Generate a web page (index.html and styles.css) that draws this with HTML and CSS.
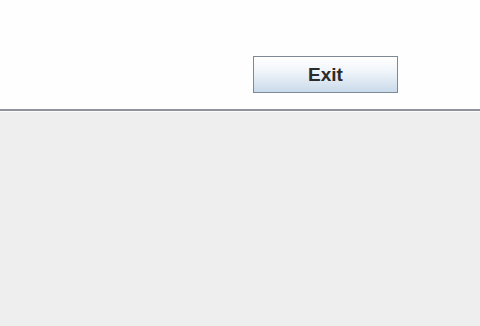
FILE: index.html
```html
<!DOCTYPE html>
<html>
<head>
<meta charset="utf-8">
<link rel="stylesheet" href="styles.css">
</head>
<body>
<div class="top">
  <button class="exit">Exit</button>
</div>
<div class="bottom"></div>
</body>
</html>
```
FILE: styles.css
```css
html, body {
  margin: 0;
  padding: 0;
  width: 480px;
  height: 326px;
  overflow: hidden;
  background: #eeeeee;
  font-family: "Liberation Sans", Arial, sans-serif;
}
.top {
  height: 111px;
  box-sizing: border-box;
  background: #fefefe;
  border-bottom: 2px solid #8d929c;
  padding: 56px 0 0 253px;
}
.exit {
  display: flex;
  align-items: center;
  justify-content: center;
  width: 145px;
  height: 37px;
  box-sizing: border-box;
  border: 1px solid #7d8a96;
  background: linear-gradient(#ffffff 0%, #f1f5fa 40%, #c9daea 100%);
  font-family: "Liberation Sans", Arial, sans-serif;
  font-weight: bold;
  font-size: 19px;
  color: #2b2b2b;
  padding: 1px 0 0 0;
  margin: 0;
}
.bottom {
  height: 215px;
  border-top: 1px solid #fafafa;
  background: #eeeeee;
}
```
